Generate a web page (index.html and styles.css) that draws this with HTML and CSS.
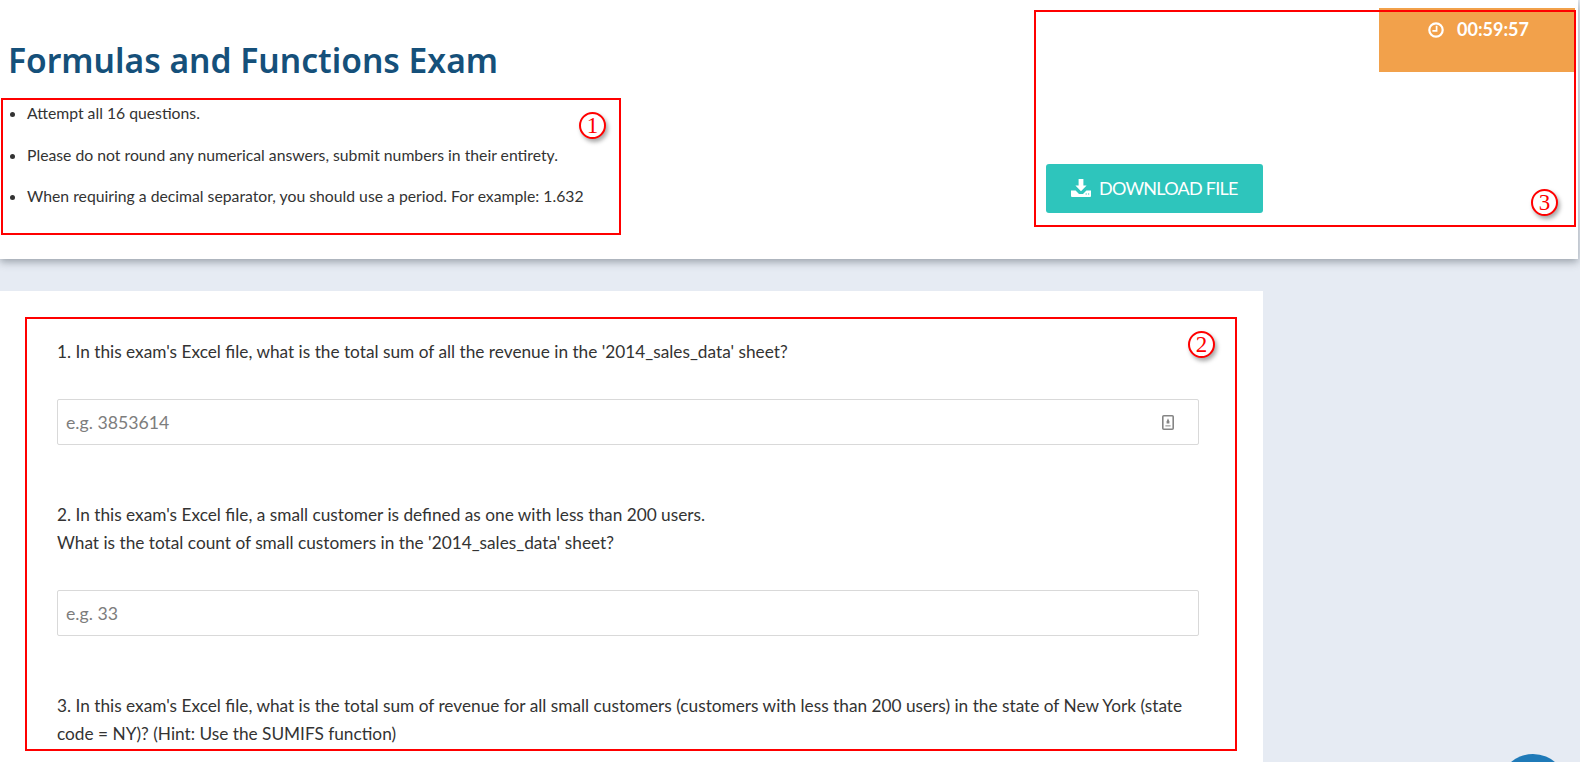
FILE: index.html
```html
<!DOCTYPE html>
<html lang="en">
<head>
    <meta charset="UTF-8">
    <meta name="viewport" content="width=device-width, initial-scale=1.0">
    <title>Formulas and Functions Exam</title>
    <link rel="stylesheet" href="styles.css">
</head>
<body>
    <header class="exam-header">
        <div class="exam-info">
            <h1>Formulas and Functions Exam</h1>
            <ul>
                <li>Attempt all 16 questions.</li>
                <li>Please do not round any numerical answers, submit numbers in their entirety.</li>
                <li>When requiring a decimal separator, you should use a period. For example: 1.632</li>
            </ul>
        </div>
        <div class="exam-tools">
            <div class="timer">
                <svg class="timer-icon" viewBox="0 0 16 16" aria-hidden="true">
                    <circle cx="8" cy="8" r="6.7" fill="none" stroke="#fff" stroke-width="2.2"/>
                    <path d="M8.600 3.800v5H4.400" fill="none" stroke="#fff" stroke-width="1.700"/>
                </svg>
                <span>00:59:57</span>
            </div>
            <button class="download-btn" type="button">
                <svg class="download-icon" viewBox="0 0 20 18" aria-hidden="true">
                    <path fill="#fff" d="M7.600 0h4.800v6.400h3.200L10 12.200 4.400 6.400h3.200z"/>
                    <path fill="#fff" fill-rule="evenodd" d="M0 11.600h4.600L8 15h4l3.400-3.400H20v5.400a1 1 0 0 1-1 1H1a1 1 0 0 1-1-1zM14.600 14.400h1.200v1.200h-1.200zM17 14.400h1.200v1.200H17z"/>
                </svg>
                Download file
            </button>
        </div>
    </header>

    <main class="questions">
        <section class="question">
            <p>1. In this exam's Excel file, what is the total sum of all the revenue in the '2014_sales_data' sheet?</p>
            <div class="answer">
                <input type="text" placeholder="e.g. 3853614">
                <svg class="autofill-icon" viewBox="0 0 12 15" aria-hidden="true">
                    <rect x="0.800" y="0.800" width="10.400" height="13.400" rx="1" fill="#fff" stroke="#858585" stroke-width="1.600"/>
                    <path fill="#858585" d="M6 3.200l1.400 3.400v2H4.600v-2z"/>
                    <rect x="3.400" y="10" width="5.200" height="1.600" fill="#b5b5b5"/>
                </svg>
            </div>
        </section>
        <section class="question">
            <p>2. In this exam's Excel file, a small customer is defined as one with less than 200 users.<br>What is the total count of small customers in the '2014_sales_data' sheet?</p>
            <div class="answer">
                <input type="text" placeholder="e.g. 33">
            </div>
        </section>
        <section class="question">
            <p>3. In this exam's Excel file, what is the total sum of revenue for all small customers (customers with less than 200 users) in the state of New York (state code = NY)? (Hint: Use the SUMIFS function)</p>
        </section>
    </main>

    <div class="chat-bubble"></div>

    <!-- red annotations drawn over the screenshot -->
    <div class="note-box note-box-1"></div>
    <div class="note-box note-box-2"></div>
    <div class="note-box note-box-3"></div>
    <span class="note-num note-num-1">1</span>
    <span class="note-num note-num-2">2</span>
    <span class="note-num note-num-3">3</span>
</body>
</html>
```

FILE: styles.css
```css
* {
    margin: 0;
    padding: 0;
    box-sizing: border-box;
}

html,
body {
    height: 100%;
    overflow: hidden;
}

body {
    position: relative;
    background-color: #e6ebf3;
    color: #333;
    font-family: Lato, "Liberation Sans", sans-serif;
}

/* Header */
.exam-header {
    display: flex;
    justify-content: space-between;
    width: 1578px;
    height: 259px;
    background-color: #fff;
    box-shadow: 0 3px 8px rgba(60, 70, 80, 0.45);
}

.exam-info {
    padding: 38px 0 0 8px;
}

.exam-info h1 {
    color: #15507a;
    font-family: "Noto Sans", sans-serif;
    font-size: 33.600px;
    font-weight: 600;
    line-height: 45px;
}

.exam-info ul {
    margin-top: 20px;
    padding-left: 19px;
    font-size: 15.750px;
}

.exam-info li {
    line-height: 20px;
    margin-bottom: 21.500px;
}

.exam-tools {
    display: flex;
    flex-direction: column;
    justify-content: space-between;
    width: 532px;
    padding: 8px 3px 46px 0;
}

.timer {
    display: flex;
    align-self: flex-end;
    justify-content: center;
    gap: 13px;
    width: 196px;
    height: 64px;
    padding: 11px 0 0 3px;
    background-color: #f2a14b;
    color: #fff;
    font-size: 18px;
    font-weight: 700;
    line-height: 20px;
}

.timer-icon {
    width: 16px;
    height: 16px;
    margin-top: 3px;
}

.download-btn {
    display: flex;
    align-items: center;
    gap: 8px;
    width: 217px;
    height: 49px;
    padding: 0 0 2px 25px;
    background-color: #2ec5bc;
    color: #fff;
    border: none;
    border-radius: 3px;
    font-family: inherit;
    font-size: 18px;
    letter-spacing: -0.750px;
    text-transform: uppercase;
}

.download-icon {
    width: 20px;
    height: 18px;
}

/* Questions */
.questions {
    width: 1263px;
    min-height: 600px;
    margin-top: 32px;
    padding: 47px 64px 0 57px;
    background-color: #fff;
}

.question {
    margin-bottom: 56px;
}

.question p {
    font-size: 17.250px;
    line-height: 28.500px;
}

.answer {
    position: relative;
    margin-top: 32px;
}

.answer input {
    display: block;
    width: 100%;
    height: 46px;
    padding: 1px 8px 0;
    background-color: #fff;
    border: 1px solid #d9d9d9;
    border-radius: 2px;
    font-family: inherit;
    font-size: 17.700px;
}

.answer input::placeholder {
    color: #7d7d7d;
}

.autofill-icon {
    position: absolute;
    top: 16px;
    right: 25px;
    width: 12px;
    height: 15px;
}

.chat-bubble {
    position: absolute;
    top: 754px;
    left: 1499px;
    width: 68px;
    height: 68px;
    background-color: #1f7ab8;
    border-radius: 50%;
}

/* Annotations */
.note-box {
    position: absolute;
    border: 2px solid #f00;
}

.note-box-1 {
    top: 98px;
    left: 1px;
    width: 620px;
    height: 137px;
}

.note-box-2 {
    top: 317px;
    left: 25px;
    width: 1212px;
    height: 434px;
}

.note-box-3 {
    top: 10px;
    left: 1034px;
    width: 542px;
    height: 217px;
}

.note-num {
    position: absolute;
    width: 27px;
    height: 27px;
    background-color: #fff;
    color: #f00;
    border: 2px solid #f00;
    border-radius: 50%;
    box-shadow: 2px 3px 4px rgba(0, 0, 0, 0.35);
    font-family: "Liberation Serif", serif;
    font-size: 23px;
    line-height: 23px;
    text-align: center;
}

.note-num-1 {
    top: 112px;
    left: 579px;
}

.note-num-2 {
    top: 331px;
    left: 1188px;
}

.note-num-3 {
    top: 189px;
    left: 1531px;
}
```
